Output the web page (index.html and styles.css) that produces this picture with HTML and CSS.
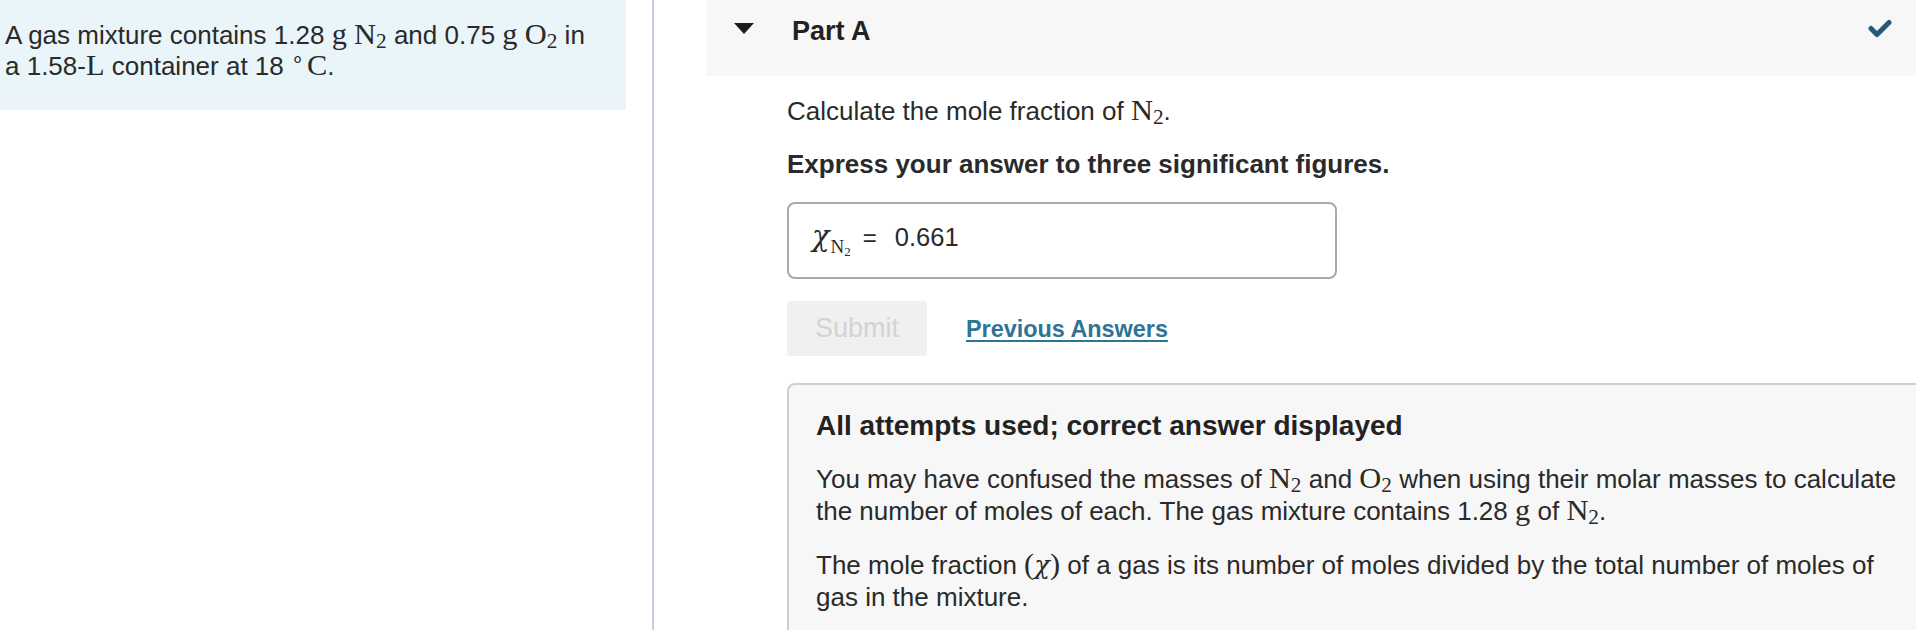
FILE: index.html
```html
<!DOCTYPE html>
<html lang="en">
<head>
<meta charset="utf-8">
<title>Part A</title>
<link rel="stylesheet" href="styles.css">
</head>
<body>
<div class="page">
  <aside class="intro">
    <div class="intro-box">
      <p>A gas mixture contains 1.28 <span class="m">g</span> <span class="m">N<sub>2</sub></span> and 0.75 <span class="m">g</span> <span class="m">O<sub>2</sub></span> in<br>a 1.58-<span class="m">L</span> container at 18 <span class="m"><sup class="deg">∘</sup>C</span>.</p>
    </div>
  </aside>
  <div class="divider"></div>
  <main class="part">
    <header class="part-head">
      <span class="caret"></span>
      <h2 class="part-title">Part A</h2>
      <svg class="check" viewBox="0 0 24 19" aria-hidden="true"><polyline points="3,9.5 9,15.5 21,3.5" fill="none" stroke="#255b72" stroke-width="5" stroke-linecap="round" stroke-linejoin="round"/></svg>
    </header>
    <div class="part-body">
      <p class="prompt">Calculate the mole fraction of <span class="m">N<sub>2</sub></span>.</p>
      <p class="instr">Express your answer to three significant figures.</p>
      <div class="answer">
        <span class="expr"><span class="m chi">χ</span><span class="m sub1">N<span class="sub2">2</span></span><span class="eq">=</span><span class="val">0.661</span></span>
      </div>
      <div class="actions">
        <button class="submit" type="button" disabled>Submit</button>
        <a class="prev" href="#">Previous Answers</a>
      </div>
      <section class="feedback">
        <h3>All attempts used; correct answer displayed</h3>
        <p>You may have confused the masses of <span class="m">N<sub>2</sub></span> and <span class="m">O<sub>2</sub></span> when using their molar masses to calculate the number of moles of each. The gas mixture contains 1.28 <span class="m">g</span> of <span class="m">N<sub>2</sub></span>.</p>
        <p>The mole fraction <span class="m">(<i class="gk">χ</i>)</span> of a gas is its number of moles divided by the total number of moles of gas in the mixture.</p>
      </section>
    </div>
  </main>
</div>
</body>
</html>
```
FILE: styles.css
```css
html, body {
  margin: 0;
  padding: 0;
}
body {
  font-family: "Liberation Sans", Arial, Helvetica, sans-serif;
  font-size: 26px;
  line-height: 32px;
  color: #2a2a2a;
  background: #ffffff;
  overflow: hidden;
  width: 1916px;
  height: 630px;
}
.page {
  display: flex;
  align-items: stretch;
  height: 630px;
}
.intro {
  width: 626px;
  flex: none;
}
.intro-box {
  background: #e9f5f8;
  height: 110px;
  box-sizing: border-box;
  padding: 20px 5px 0 5px;
}
.intro-box p {
  margin: 0;
  line-height: 31px;
}
.divider {
  width: 2px;
  margin-left: 26px;
  background: #c3cfdf;
  flex: none;
}
.part {
  flex: 1;
  margin-left: 52px;
  min-width: 0;
}
.part-head {
  height: 76px;
  background: #f7f7f7;
  display: flex;
  align-items: flex-start;
  padding: 15px 24px 0 28px;
  box-sizing: border-box;
}
.caret {
  width: 0;
  height: 0;
  border-left: 10px solid transparent;
  border-right: 10px solid transparent;
  border-top: 11px solid #1c1c1c;
  margin-top: 8px;
  flex: none;
}
.part-title {
  margin: 0 0 0 38px;
  font-size: 27px;
  font-weight: bold;
  line-height: 32px;
  color: #222;
  flex: 1;
}
.check {
  width: 24px;
  height: 19px;
  margin-top: 4px;
  flex: none;
}
.part-body {
  padding: 19px 0 0 81px;
}
.prompt {
  margin: 0;
}
.instr {
  margin: 21px 0 0;
  font-weight: bold;
}
.m {
  font-family: "Liberation Serif", "Times New Roman", serif;
  font-size: 1.17em;
  line-height: 0;
}
.m sub {
  font-size: 0.7em;
  line-height: 0;
  vertical-align: -0.2em;
}
.m .deg {
  font-size: 0.7em;
  line-height: 0;
  vertical-align: 0.45em;
  margin-right: 3px;
}
.gk {
  font-family: "DejaVu Serif", serif;
  font-size: 0.85em;
}
.answer {
  margin-top: 22px;
  width: 550px;
  height: 77px;
  box-sizing: border-box;
  border: 2px solid #a9a9a9;
  border-radius: 8px;
  display: flex;
  align-items: center;
  padding: 0 0 6px 23px;
}
.expr {
  display: inline-block;
  line-height: 32px;
  white-space: nowrap;
}
.chi {
  font-family: "DejaVu Serif", serif;
  font-style: italic;
  font-size: 29px;
}
.sub1 {
  font-size: 19px;
  position: relative;
  top: 7px;
  margin-left: 1px;
}
.sub2 {
  font-size: 13px;
  position: relative;
  top: 3px;
}
.eq {
  font-size: 24px;
  margin-left: 12px;
}
.val {
  font-size: 25.5px;
  margin-left: 18px;
}
.actions {
  margin-top: 22px;
  display: flex;
  align-items: center;
  gap: 39px;
}
.submit {
  width: 140px;
  height: 55px;
  border: none;
  border-radius: 4px;
  background: #f0f0f0;
  color: #d3d3d3;
  font-family: inherit;
  font-size: 27px;
  padding: 0;
}
.prev {
  font-size: 23.4px;
  font-weight: bold;
  color: #2f7396;
  text-decoration: underline;
  text-underline-offset: 3px;
}
.feedback {
  margin-top: 27px;
  margin-right: -60px;
  border: 2px solid #cfcfcf;
  border-radius: 8px;
  background: #f7f7f7;
  padding: 25px 0 40px 27px;
}
.feedback h3 {
  margin: 0;
  font-size: 28px;
  line-height: 32px;
  color: #222;
}
.feedback p {
  margin: 21px 0 0;
  width: 1100px;
}
.feedback .m {
  line-height: 1;
}
.feedback p + p {
  margin-top: 22px;
}
```
